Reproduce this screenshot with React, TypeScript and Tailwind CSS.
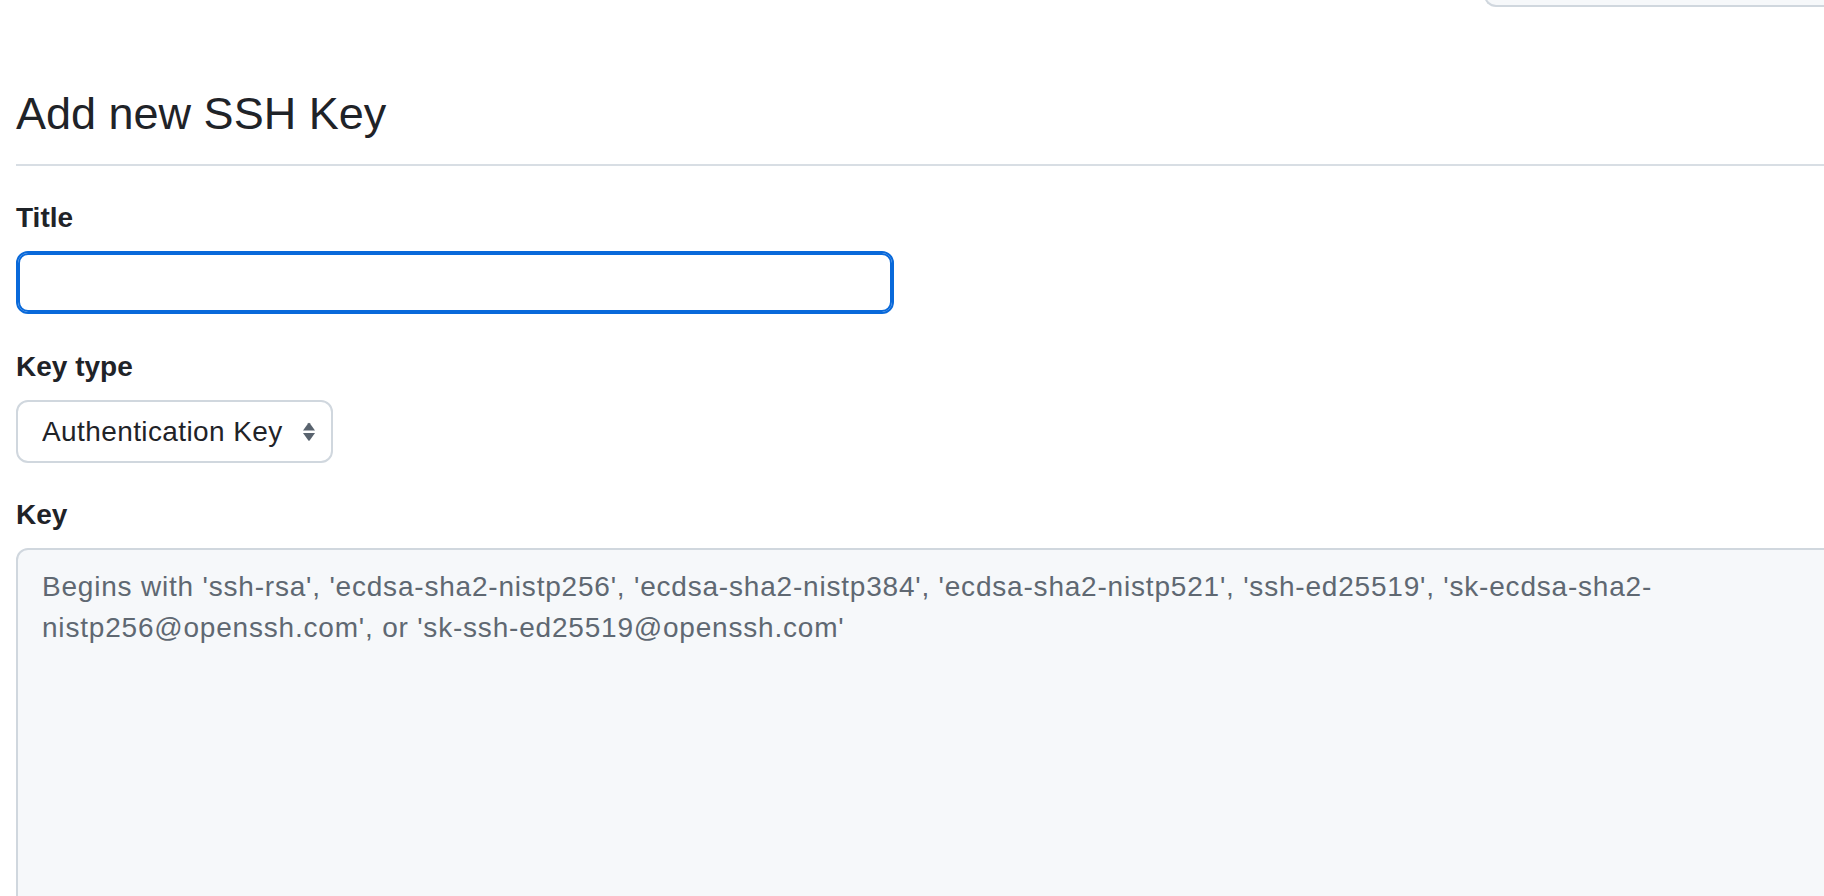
import React from "react";

const font = { fontFamily: '"Liberation Sans", Arial, sans-serif' };

function SelectArrows() {
  return (
    <svg width="14" height="20" viewBox="0 0 14 20" className="pointer-events-none absolute right-[17px] top-1/2 -translate-y-1/2" aria-hidden="true">
      <path d="M1 8.5 L6.2 1.2 Q7 0.2 7.8 1.2 L13 8.5 Z" fill="#59636e" />
      <path d="M1 11 L6.2 18.3 Q7 19.3 7.8 18.3 L13 11 Z" fill="#59636e" />
    </svg>
  );
}

export default function App() {
  const placeholder =
    "Begins with 'ssh-rsa', 'ecdsa-sha2-nistp256', 'ecdsa-sha2-nistp384', 'ecdsa-sha2-nistp521', 'ssh-ed25519', 'sk-ecdsa-sha2-\nnistp256@openssh.com', or 'sk-ssh-ed25519@openssh.com'";
  return (
    <div className="w-screen h-screen overflow-hidden bg-white text-[#1f2328]" style={font}>
      <div className="w-[1900px] pl-4">
        <div className="flex h-[7px]">
          <div className="ml-auto mt-[-33px] h-[40px] w-[416px] rounded-bl-[12px] border-b-2 border-l-2 border-[#d0d7de] bg-[#f6f8fa]" />
        </div>

        <div className="mt-[77px] border-b-2 border-[#d8dee4] pb-[20px]">
          <h1 className="text-[45px] font-normal leading-[60px]">Add new SSH Key</h1>
        </div>

        <form className="flex flex-col">
          <label htmlFor="title" className="mt-[32px] mb-[13px] text-[28px] font-bold leading-[40px]">
            Title
          </label>
          <input
            id="title"
            type="text"
            className="h-[63px] w-[878px] rounded-[12px] border-2 border-[#0969da] bg-white px-[24px] text-[28px] outline-none shadow-[inset_0_0_0_2px_#0969da]"
            style={font}
          />

          <label htmlFor="keytype" className="mt-[33px] mb-[13px] text-[28px] font-bold leading-[40px]">
            Key type
          </label>
          <div className="relative w-[317px]">
            <select
              id="keytype"
              className="h-[63px] w-full appearance-none rounded-[12px] border-2 border-[#d0d7de] bg-white pl-[24px] pr-[48px] text-[28px] tracking-[0.4px] text-[#1f2328] outline-none"
              style={font}
              defaultValue="auth"
            >
              <option value="auth">Authentication Key</option>
              <option value="sign">Signing Key</option>
            </select>
            <SelectArrows />
          </div>

          <label htmlFor="key" className="mt-[32px] mb-[13px] text-[28px] font-bold leading-[40px]">
            Key
          </label>
          <textarea
            id="key"
            placeholder={placeholder}
            className="h-[420px] w-full resize-none rounded-[12px] border-2 border-[#d0d7de] bg-[#f6f8fa] px-[24px] pt-[16px] text-[28px] leading-[41px] tracking-[0.8px] outline-none placeholder:text-[#5f6872]"
            style={font}
          />
        </form>
      </div>
    </div>
  );
}
